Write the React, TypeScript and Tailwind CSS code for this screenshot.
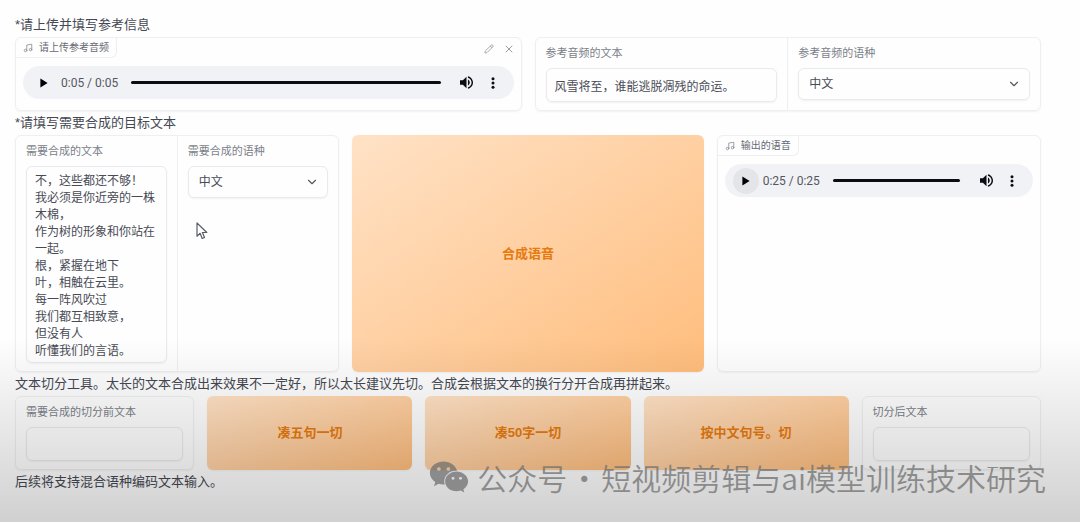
import { useState } from "react";
import type { ReactNode } from "react";
import { Music, Pencil, X, ChevronDown } from "lucide-react";
import { FaWeixin } from "react-icons/fa";
import clsx from "clsx";

const POEM = `不，这些都还不够！
我必须是你近旁的一株木棉，
作为树的形象和你站在一起。
根，紧握在地下
叶，相触在云里。
每一阵风吹过
我们都互相致意，
但没有人
听懂我们的言语。`;

const LANGUAGES = ["中文", "英文", "日文"];

const panel = "rounded-md border border-[#eeeff1] shadow-xs";
const control =
  "block w-full rounded-md border border-[#e9eaed] bg-transparent text-[12px] text-[#484b55] shadow-xs outline-none";

function Heading({ children }: { children: ReactNode }) {
  return <p className="text-[13px] leading-6 text-[#444852]">{children}</p>;
}

function Field({
  id,
  label,
  children,
}: {
  id: string;
  label: string;
  children: ReactNode;
}) {
  return (
    <div className="min-w-0 flex-1 px-[10px] py-2">
      <label
        htmlFor={id}
        className="mb-2 block text-[11px] leading-[14px] text-[#7b7f88]"
      >
        {label}
      </label>
      {children}
    </div>
  );
}

function LanguageSelect({ id }: { id: string }) {
  const [value, setValue] = useState("中文");

  return (
    <div className="relative">
      <select
        id={id}
        value={value}
        onChange={(e) => setValue(e.target.value)}
        className={clsx(control, "h-8 appearance-none px-[10px]")}
      >
        {LANGUAGES.map((lang) => (
          <option key={lang}>{lang}</option>
        ))}
      </select>
      <ChevronDown className="pointer-events-none absolute top-2 right-2 size-4 p-px text-[#555962]" />
    </div>
  );
}

function TextInput({ id, initial = "" }: { id: string; initial?: string }) {
  const [value, setValue] = useState(initial);

  return (
    <input
      id={id}
      type="text"
      value={value}
      onChange={(e) => setValue(e.target.value)}
      className={clsx(control, "h-[34px] px-2")}
    />
  );
}

function AudioPlayer({ time, active }: { time: string; active?: boolean }) {
  return (
    <div className="mx-[7px] mt-2 mb-[11px] flex h-[33px] items-center rounded-full bg-[#f1f2f6] px-2">
      <button
        aria-label="播放"
        className={clsx(
          "flex size-[26px] items-center justify-center rounded-full",
          active && "bg-[#e4e5e9]"
        )}
      >
        <svg viewBox="0 0 10 12" className="h-[10px] w-2 fill-black">
          <path d="M0.5 0.5v11L9.5 6z" />
        </svg>
      </button>
      <span className="ml-1 font-[Roboto] text-[12px] whitespace-nowrap text-[#55575d]">
        {time} / {time}
      </span>
      <input
        type="range"
        aria-label="进度"
        min={0}
        max={100}
        defaultValue={100}
        className="mx-[13px] h-[3px] min-w-0 flex-1 appearance-none rounded-full bg-[#0c0d12] [&::-webkit-slider-thumb]:size-0 [&::-webkit-slider-thumb]:appearance-none"
      />
      <button
        aria-label="音量"
        className="flex size-[26px] items-center justify-center"
      >
        <svg viewBox="3 3 18 18" className="size-[13px] fill-[#0c0d12]">
          <path d="M3 9v6h4l5 5V4L7 9H3zm13.5 3c0-1.77-1.02-3.29-2.5-4.03v8.05c1.48-.73 2.5-2.25 2.5-4.02zM14 3.23v2.06c2.89.86 5 3.54 5 6.71s-2.11 5.85-5 6.71v2.06c4.01-.91 7-4.49 7-8.77s-2.99-7.86-7-8.77z" />
        </svg>
      </button>
      <button
        aria-label="更多"
        className="flex size-[26px] items-center justify-center"
      >
        <svg viewBox="0 0 4 12" className="h-3 w-1 fill-[#0c0d12]">
          <circle cx="2" cy="1.7" r="1.5" />
          <circle cx="2" cy="6" r="1.5" />
          <circle cx="2" cy="10.3" r="1.5" />
        </svg>
      </button>
    </div>
  );
}

function AudioPanel({
  label,
  time,
  active,
  editable,
}: {
  label: string;
  time: string;
  active?: boolean;
  editable?: boolean;
}) {
  return (
    <div className={clsx(panel, "min-w-0")}>
      <div className="flex h-5 items-start justify-between">
        <div className="flex h-5 items-center gap-[6px] rounded-br-md border-r border-b border-[#eeeff1] px-[7px] text-[10px] text-[#666a73]">
          <Music className="size-[10px] text-[#8b8e96]" />
          {label}
        </div>
        {editable && (
          <div className="flex gap-2 pt-[5px] pr-[6px] text-[#9a9ca3]">
            <button aria-label="编辑">
              <Pencil className="size-3 p-px" />
            </button>
            <button aria-label="清除">
              <X className="size-3" />
            </button>
          </div>
        )}
      </div>
      <AudioPlayer time={time} active={active} />
    </div>
  );
}

function ActionButton({ children }: { children: ReactNode }) {
  return (
    <button className="rounded-md bg-linear-to-br from-[#ffe2c6] to-[#ffbd7c] text-[13px] font-bold text-[#e67a0e] shadow-xs">
      {children}
    </button>
  );
}

export default function App() {
  const [target, setTarget] = useState(POEM);

  return (
    <div className="relative min-h-screen bg-[#fefefe] pt-[13px] pr-[39px] pl-[15px] font-['Liberation_Sans','Noto_Sans_CJK_SC',sans-serif]">
      <Heading>*请上传并填写参考信息</Heading>
      <div className="grid grid-cols-2 gap-[13px]">
        <AudioPanel label="请上传参考音频" time="0:05" editable />
        <div className={clsx(panel, "flex divide-x divide-[#eeeff1]")}>
          <Field id="ref-text" label="参考音频的文本">
            <TextInput id="ref-text" initial="风雪将至，谁能逃脱凋残的命运。" />
          </Field>
          <Field id="ref-lang" label="参考音频的语种">
            <LanguageSelect id="ref-lang" />
          </Field>
        </div>
      </div>

      <Heading>*请填写需要合成的目标文本</Heading>
      <div className="grid grid-cols-[12fr_13fr_12fr] gap-[13px]">
        <div className={clsx(panel, "flex divide-x divide-[#eeeff1]")}>
          <Field id="target-text" label="需要合成的文本">
            <textarea
              id="target-text"
              rows={11}
              value={target}
              onChange={(e) => setTarget(e.target.value)}
              className={clsx(
                control,
                "resize-none overflow-hidden px-2 pt-[6px] pb-[2px] leading-[17px]"
              )}
            />
          </Field>
          <Field id="target-lang" label="需要合成的语种">
            <LanguageSelect id="target-lang" />
            {/* mouse pointer */}
            <svg viewBox="0 0 12 18" className="mt-6 ml-2 h-[18px] w-3">
              <path
                d="M1 1v13.2l3.1-2.9 2.1 5.2 2.3-1-2.1-5h4.4z"
                fill="#fff"
                stroke="#5b5d66"
                strokeWidth="1.2"
                strokeLinejoin="round"
              />
            </svg>
          </Field>
        </div>
        <ActionButton>合成语音</ActionButton>
        <AudioPanel label="输出的语音" time="0:25" active />
      </div>

      <Heading>
        文本切分工具。太长的文本合成出来效果不一定好，所以太长建议先切。合成会根据文本的换行分开合成再拼起来。
      </Heading>
      <div className="grid grid-cols-[7fr_8fr_8fr_8fr_7fr] gap-[13px]">
        <div className={panel}>
          <Field id="split-in" label="需要合成的切分前文本">
            <TextInput id="split-in" />
          </Field>
        </div>
        <ActionButton>凑五句一切</ActionButton>
        <ActionButton>凑50字一切</ActionButton>
        <ActionButton>按中文句号。切</ActionButton>
        <div className={panel}>
          <Field id="split-out" label="切分后文本">
            <TextInput id="split-out" />
          </Field>
        </div>
      </div>
      <Heading>后续将支持混合语种编码文本输入。</Heading>

      {/* bottom shade */}
      <div className="pointer-events-none absolute inset-x-0 bottom-0 h-[184px] bg-linear-to-b from-black/0 to-black/18" />

      <div className="pointer-events-none absolute right-[34px] bottom-[25px] flex items-center gap-2 text-[#707070] opacity-75">
        <FaWeixin className="size-10" />
        <div className="flex gap-[2px] font-['Noto_Sans_CJK_SC',sans-serif] text-[30px] leading-10 font-[350] whitespace-nowrap">
          <span>公众号</span>
          <span>·</span>
          <span>短视频剪辑与ai模型训练技术研究</span>
        </div>
      </div>
    </div>
  );
}
